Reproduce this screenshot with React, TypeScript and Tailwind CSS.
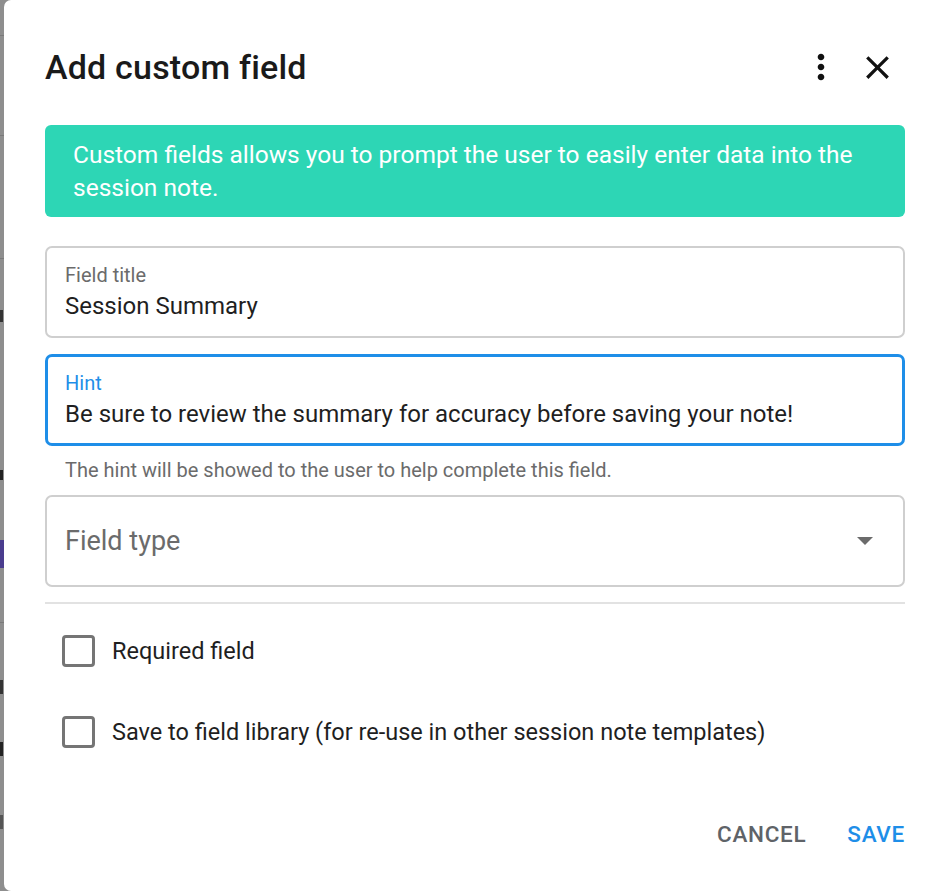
import { useState } from 'react';

function MoreIcon() {
    return (
        <svg width="40" height="40" viewBox="0 0 24 24" fill="#111">
            <path d="M12 8c1.1 0 2-.9 2-2s-.9-2-2-2-2 .9-2 2 .9 2 2 2zm0 2c-1.1 0-2 .9-2 2s.9 2 2 2 2-.9 2-2-.9-2-2-2zm0 6c-1.1 0-2 .9-2 2s.9 2 2 2 2-.9 2-2-.9-2-2-2z" />
        </svg>
    );
}

function CloseIcon() {
    return (
        <svg width="39" height="39" viewBox="0 0 24 24" fill="#111">
            <path d="M19 6.41 17.59 5 12 10.59 6.41 5 5 6.41 10.59 12 5 17.59 6.41 19 12 13.41 17.59 19 19 17.59 13.41 12z" />
        </svg>
    );
}

function Checkbox({ label }: { label: string }) {
    const [checked, setChecked] = useState(false);
    return (
        <label className="flex items-center gap-[17px] pl-[17px] cursor-pointer">
            <span
                onClick={() => setChecked(!checked)}
                className="w-[33px] h-[32px] rounded-[4px] border-[3px] border-[#757575] bg-white"
            />
            <span className="text-[23.5px] leading-[32px] text-[#1f1f1f]">{label}</span>
        </label>
    );
}

export default function App() {
    return (
        <div className="flex min-h-[891px] w-full bg-[#8e8e8e] font-['Roboto',_sans-serif]">
            {/* backdrop sliver */}
            <div className="relative w-[4px] shrink-0">
                <div className="absolute left-0 top-[35px] w-[4px] h-[1px] bg-[#7a7a7a]" />
                <div className="absolute left-0 top-[135px] w-[4px] h-[1px] bg-[#7a7a7a]" />
                <div className="absolute left-0 top-[258px] w-[4px] h-[1px] bg-[#7a7a7a]" />
                <div className="absolute left-0 top-[310px] w-[3px] h-[12px] bg-[#333]" />
                <div className="absolute left-0 top-[470px] w-[3px] h-[10px] bg-[#222]" />
                <div className="absolute left-0 top-[540px] w-[4px] h-[28px] bg-[#4a3d8e]" />
                <div className="absolute left-0 top-[622px] w-[4px] h-[1px] bg-[#7a7a7a]" />
                <div className="absolute left-0 top-[680px] w-[3px] h-[14px] bg-[#333]" />
                <div className="absolute left-0 top-[742px] w-[3px] h-[14px] bg-[#222]" />
                <div className="absolute left-0 top-[815px] w-[3px] h-[14px] bg-[#555]" />
            </div>

            <div className="flex-1 bg-white rounded-l-[7px] pl-[41px] pr-[37px] pt-[37px] pb-[30px] flex flex-col">
                {/* header */}
                <div className="flex items-center justify-between h-[60px]">
                    <h2 className="text-[34px] font-medium text-[#1a1a1a] tracking-[0.2px]">Add custom field</h2>
                    <div className="flex items-center gap-[17px] pr-[8px]">
                        <button type="button" className="flex items-center justify-center">
                            <MoreIcon />
                        </button>
                        <button type="button" className="flex items-center justify-center">
                            <CloseIcon />
                        </button>
                    </div>
                </div>

                {/* info banner */}
                <div className="mt-[28px] rounded-[6px] bg-[#2dd6b5] pl-[28px] pr-[20px] py-[13px] text-white text-[24.5px] leading-[33px]">
                    Custom fields allows you to prompt the user to easily enter data into the session note.
                </div>

                {/* field title */}
                <div className="mt-[29px] h-[92px] rounded-[7px] border-[2px] border-[#cfcfcf] px-[18px] pt-[14px]">
                    <div className="text-[20px] leading-[26px] text-[#6b6b6b]">Field title</div>
                    <div className="mt-[2px] text-[24px] leading-[32px] text-[#1f1f1f]">Session Summary</div>
                </div>

                {/* hint */}
                <div className="mt-[16px] h-[92px] rounded-[7px] border-[3px] border-[#1e8ee8] px-[17px] pt-[13px]">
                    <div className="text-[20px] leading-[26px] text-[#1e8ee8]">Hint</div>
                    <div className="mt-[2px] text-[24px] leading-[32px] text-[#1f1f1f]">
                        Be sure to review the summary for accuracy before saving your note!
                    </div>
                </div>
                <div className="mt-[11px] pl-[20px] text-[20px] leading-[26px] text-[#6b6b6b]">
                    The hint will be showed to the user to help complete this field.
                </div>

                {/* field type select */}
                <div className="mt-[12px] h-[92px] rounded-[7px] border-[2px] border-[#cfcfcf] pl-[18px] pr-[30px] flex items-center justify-between">
                    <span className="text-[27px] text-[#6b6b6b]">Field type</span>
                    <svg width="16" height="8" viewBox="0 0 16 8">
                        <path d="M0 0h16L8 8z" fill="#6b6b6b" />
                    </svg>
                </div>

                <div className="mt-[15px] h-[2px] bg-[#e2e2e2]" />

                {/* options */}
                <div className="mt-[31px] flex flex-col gap-[49px]">
                    <Checkbox label="Required field" />
                    <Checkbox label="Save to field library (for re-use in other session note templates)" />
                </div>

                {/* actions */}
                <div className="mt-auto flex justify-end items-center gap-[41px] pb-[9px]">
                    <button type="button" className="text-[22.5px] font-medium uppercase tracking-[0.7px] text-[#5f6368]">
                        Cancel
                    </button>
                    <button type="button" className="text-[22.5px] font-medium uppercase tracking-[0.7px] text-[#1e8ee8]">
                        Save
                    </button>
                </div>
            </div>
        </div>
    );
}
